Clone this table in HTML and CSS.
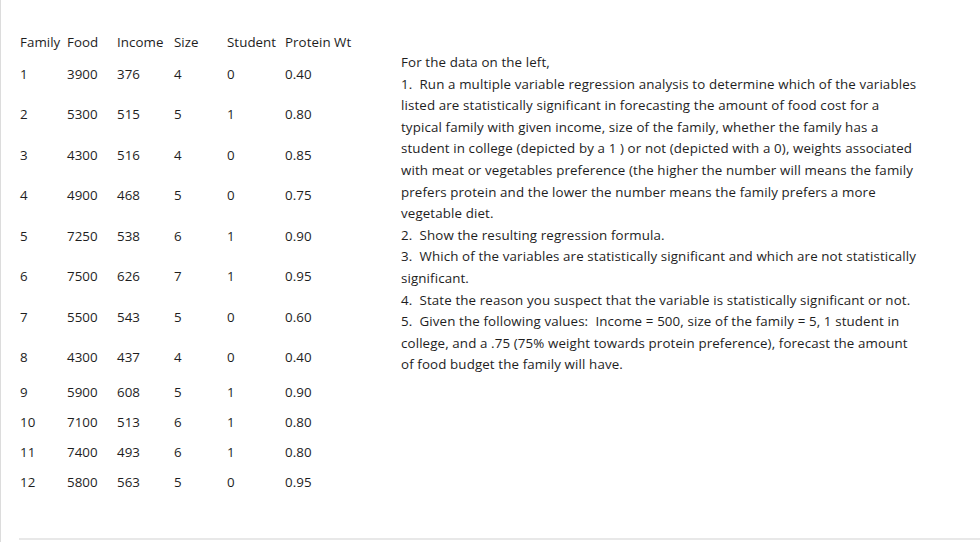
FILE: index.html
```html
<!DOCTYPE html>
<html>
<head>
<meta charset="utf-8">
<link rel="stylesheet" href="styles.css">
</head>
<body>
<div class="frame">
  <div class="content">
    <div class="table">
      <div class="row head"><span>Family</span><span>Food</span><span>Income</span><span>Size</span><span>Student</span><span>Protein Wt</span></div>
      <div class="row tall"><span>1</span><span>3900</span><span>376</span><span>4</span><span>0</span><span>0.40</span></div>
      <div class="row tall"><span>2</span><span>5300</span><span>515</span><span>5</span><span>1</span><span>0.80</span></div>
      <div class="row tall"><span>3</span><span>4300</span><span>516</span><span>4</span><span>0</span><span>0.85</span></div>
      <div class="row tall"><span>4</span><span>4900</span><span>468</span><span>5</span><span>0</span><span>0.75</span></div>
      <div class="row tall"><span>5</span><span>7250</span><span>538</span><span>6</span><span>1</span><span>0.90</span></div>
      <div class="row tall"><span>6</span><span>7500</span><span>626</span><span>7</span><span>1</span><span>0.95</span></div>
      <div class="row tall"><span>7</span><span>5500</span><span>543</span><span>5</span><span>0</span><span>0.60</span></div>
      <div class="row mid"><span>8</span><span>4300</span><span>437</span><span>4</span><span>0</span><span>0.40</span></div>
      <div class="row short"><span>9</span><span>5900</span><span>608</span><span>5</span><span>1</span><span>0.90</span></div>
      <div class="row short"><span>10</span><span>7100</span><span>513</span><span>6</span><span>1</span><span>0.80</span></div>
      <div class="row short"><span>11</span><span>7400</span><span>493</span><span>6</span><span>1</span><span>0.80</span></div>
      <div class="row short"><span>12</span><span>5800</span><span>563</span><span>5</span><span>0</span><span>0.95</span></div>
    </div>
    <div class="question">
      <p>For the data on the left,</p>
      <p>1.&nbsp; Run a multiple variable regression analysis to determine which of the variables<br>listed are statistically significant in forecasting the amount of food cost for a<br>typical family with given income, size of the family, whether the family has a<br>student in college (depicted by a 1 ) or not (depicted with a 0), weights associated<br>with meat or vegetables preference (the higher the number will means the family<br>prefers protein and the lower the number means the family prefers a more<br>vegetable diet.</p>
      <p>2.&nbsp; Show the resulting regression formula.</p>
      <p>3.&nbsp; Which of the variables are statistically significant and which are not statistically<br>significant.</p>
      <p>4.&nbsp; State the reason you suspect that the variable is statistically significant or not.</p>
      <p>5.&nbsp; Given the following values:&nbsp; Income = 500, size of the family = 5, 1 student in<br>college, and a .75 (75% weight towards protein preference), forecast the amount<br>of food budget the family will have.</p>
    </div>
  </div>
  <div class="rule"></div>
</div>
</body>
</html>
```

FILE: styles.css
```css
html, body {
  margin: 0;
  padding: 0;
  background: #ffffff;
}
body {
  font-family: "Open Sans", "Noto Sans", sans-serif;
  font-size: 13.33px;
  letter-spacing: 0.12px;
  color: #1e1e1e;
}
.frame {
  width: 979px;
  height: 542px;
  border-left: 1px solid #dcdcdc;
  display: flex;
  flex-direction: column;
}
.content {
  display: flex;
  padding-left: 19px;
  flex: 1;
}
.table {
  width: 381px;
  padding-top: 33px;
  display: flex;
  flex-direction: column;
}
.row {
  display: grid;
  grid-template-columns: 47px 50px 57px 53px 58px auto;
  line-height: 18px;
  white-space: nowrap;
  letter-spacing: 0.05px;
}
.row.head { height: 32px; }
.row.tall { height: 40.43px; }
.row.mid { height: 35px; }
.row.short { height: 30px; }
.question {
  padding-top: 52px;
  line-height: 21.6px;
  white-space: nowrap;
}
.question p {
  margin: 0;
}
.rule {
  height: 2px;
  margin-left: 18px;
  margin-bottom: 2px;
  background: #e8e8e8;
}
```
